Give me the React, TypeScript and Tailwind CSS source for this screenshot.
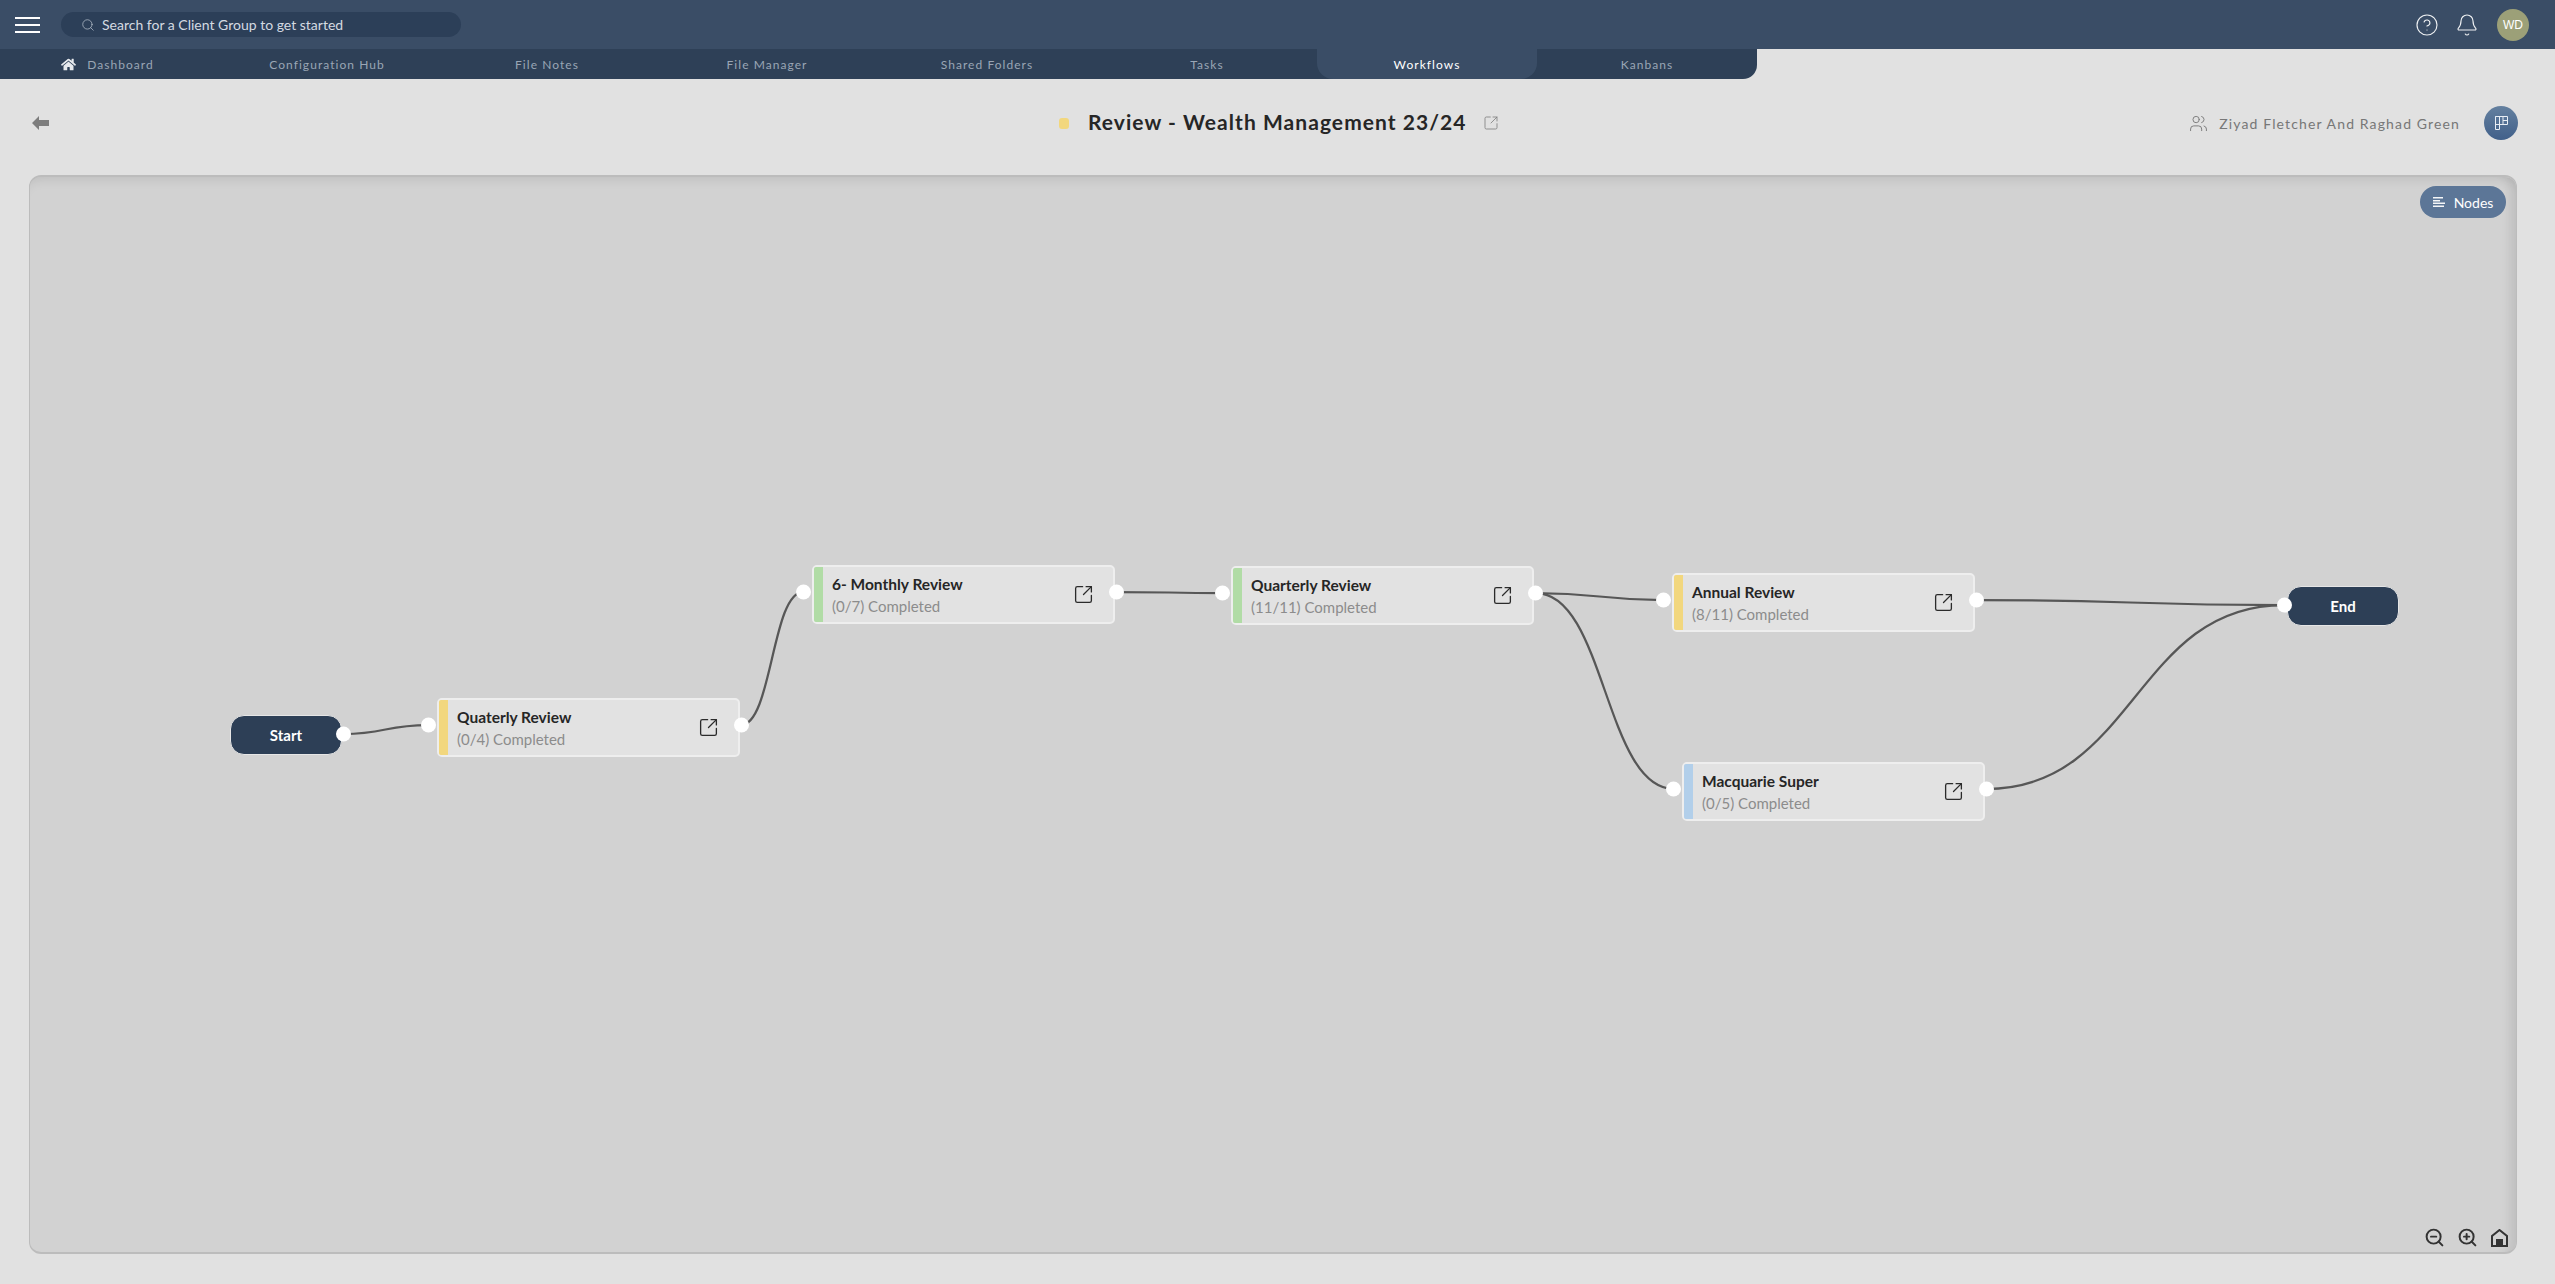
import { Bell, CircleHelp, Search, SquareArrowOutUpRight, Users, ZoomIn, ZoomOut } from "lucide-react"
import { FaHome } from "react-icons/fa"

const lato = "font-['Lato',sans-serif]"

const tabs = ["Configuration Hub", "File Notes", "File Manager", "Shared Folders", "Tasks"]

const edges = [
    [343, 734, 428, 725],
    [741, 725, 803, 592],
    [1115, 592, 1223, 593],
    [1536, 593, 1663, 600],
    [1536, 593, 1674, 789],
    [1976, 600, 2284, 605],
    [1986, 789, 2284, 605],
]

const nodes = [
    { left: 407, top: 521, title: "Quaterly Review", sub: "(0/4) Completed", bar: "bg-[#f2d77e]" },
    { left: 782, top: 388, title: "6- Monthly Review", sub: "(0/7) Completed", bar: "bg-[#b1dca6]" },
    { left: 1201, top: 389, title: "Quarterly Review", sub: "(11/11) Completed", bar: "bg-[#b1dca6]" },
    { left: 1642, top: 396, title: "Annual Review", sub: "(8/11) Completed", bar: "bg-[#f2d77e]" },
    { left: 1652, top: 585, title: "Macquarie Super", sub: "(0/5) Completed", bar: "bg-[#b2cfea]" },
]

const Handle = ({ className }: { className: string }) => (
    <span className={`absolute w-[15px] h-[15px] rounded-full bg-white -translate-y-1/2 ${className}`} />
)

const TaskNode = ({ left, top, title, sub, bar }: (typeof nodes)[number]) => (
    <div
        className="absolute w-[303px] h-[59px] flex bg-[#e2e2e2] border-2 border-[#eeeeee] rounded-[5px]"
        style={{ left, top }}
    >
        <div className={`w-[9px] shrink-0 rounded-l-[2px] ${bar}`} />
        <div className="flex-1 pl-[9px] pt-[6px]">
            <div className="text-[15.5px] leading-[22px] font-bold text-[#262626]">{title}</div>
            <div className="text-[15px] leading-[22px] text-[#8c8c8c]">{sub}</div>
        </div>
        <SquareArrowOutUpRight size={21} strokeWidth={1.5} className="mt-[17px] mr-[19px] text-[#2b2b2b]" />
        <Handle className="left-[-18px] top-[25px]" />
        <Handle className="right-[-11px] top-[25px]" />
    </div>
)

const Terminal = ({ label, left, top, handle }: { label: string; left: number; top: number; handle: string }) => (
    <div
        className="absolute w-[112px] h-[40px] flex items-center justify-center bg-[#2d3f56] border border-[#e6e6e6] rounded-[14px] text-[15px] font-bold text-white"
        style={{ left, top }}
    >
        {label}
        <Handle className={`top-[18px] ${handle}`} />
    </div>
)

const App = () => {
    return (
        <div className={`h-screen flex flex-col bg-[#e1e1e1] overflow-hidden ${lato}`}>
            <header className="h-[49px] shrink-0 flex items-center bg-[#3a4d66] pl-[15px] pr-[26px]">
                <div className="w-[25px] flex flex-col gap-[5px]">
                    <span className="h-[2px] bg-white" />
                    <span className="h-[2px] bg-white" />
                    <span className="h-[2px] bg-white" />
                </div>
                <div className="ml-[21px] w-[400px] h-[25px] flex items-center pl-[20px] rounded-full bg-[#2c3f58]">
                    <Search size={14} strokeWidth={1.25} className="text-[#b9c2cd]" />
                    <span className="ml-[7px] text-[14px] text-[#d4dae1]">Search for a Client Group to get started</span>
                </div>
                <div className="ml-auto flex items-center">
                    <CircleHelp size={24} strokeWidth={1.15} className="text-[#eef0f2]" />
                    <Bell size={24} strokeWidth={1.15} className="ml-[16px] text-[#eef0f2]" />
                    <div className="ml-[18px] w-[32px] h-[32px] rounded-full flex items-center justify-center bg-[#9ca078] text-[12px] text-white font-['Liberation_Sans',sans-serif]">
                        WD
                    </div>
                </div>
            </header>

            <nav className="h-[30px] shrink-0 w-[1757px] flex bg-[#2e4057] rounded-br-[14px] overflow-hidden text-[12px] tracking-[1.05px] text-[#9aa6b5]">
                <div className="w-[217px] pt-[2px] flex items-center justify-center">
                    <FaHome size={15} className="mr-[9px] -translate-x-[2px] -translate-y-[1px] text-[#e6e9ed]" />
                    Dashboard
                </div>
                {tabs.map((tab) => (
                    <div key={tab} className="w-[220px] pt-[2px] flex items-center justify-center">
                        {tab}
                    </div>
                ))}
                <div className="w-[220px] pt-[2px] flex items-center justify-center bg-[#3a4d66] rounded-b-[16px] text-white">
                    Workflows
                </div>
                <div className="w-[220px] pt-[2px] flex items-center justify-center">Kanbans</div>
            </nav>

            <div className="h-[96px] shrink-0 flex items-center pb-[8px] pl-[32px] pr-[37px]">
                <svg width="17" height="14" viewBox="0 0 17 14" fill="#7d7d7d">
                    <path d="M0 7 7 0v4h10v6H7v4z" />
                </svg>
                <div className="ml-[1010px] w-[10px] h-[11px] rounded-[3px] bg-[#f2d77e]" />
                <h1 className="ml-[19px] mb-[4px] text-[21px] leading-none font-bold tracking-[1.05px] text-[#262626]">
                    Review - Wealth Management 23/24
                </h1>
                <SquareArrowOutUpRight size={16} strokeWidth={1.25} className="ml-[16px] text-[#808080]" />
                <Users size={19} strokeWidth={1.25} className="ml-auto text-[#7d7d7d]" />
                <span className="ml-[11px] text-[14px] tracking-[1.13px] text-[#777777]">
                    Ziyad Fletcher And Raghad Green
                </span>
                <button className="ml-[24px] w-[34px] h-[34px] rounded-full flex items-center justify-center bg-gradient-to-b from-[#64809f] to-[#41608a]">
                    <svg width="13" height="14" viewBox="0 0 13 14" fill="none" stroke="#e8eef5" strokeWidth="1">
                        <path d="M.5.5h12v8h-12zM4.5.5v13H.5V.5M8 .5v8M8 4.5h4.5" />
                    </svg>
                </button>
            </div>

            <main className="relative ml-[29px] mr-[38px] h-[1079px] rounded-[12px] border-t-2 border-l border-b-2 border-r border-[#bcbcbc] bg-[#d2d2d2] shadow-[inset_-14px_0_10px_-8px_rgba(0,0,0,0.09),inset_0_12px_12px_-10px_rgba(0,0,0,0.1)] text-[#262626]">
                <button className="absolute right-[10px] top-[9px] w-[86px] h-[32px] flex items-center justify-center gap-[9px] rounded-full bg-[#5c7697] text-[14px] text-white">
                    <svg width="12" height="11" viewBox="0 0 12 11" fill="#f4f6f8">
                        <rect width="10" height="1.5" />
                        <rect y="3" width="7" height="1.5" />
                        <rect y="5.5" width="12" height="1.5" />
                        <rect y="8.5" width="11" height="1.5" />
                    </svg>
                    Nodes
                </button>

                <svg className="absolute left-[-30px] top-[-177px] w-[2555px] h-[1284px] pointer-events-none" fill="none">
                    {edges.map(([x1, y1, x2, y2]) => {
                        const mid = (x1 + x2) / 2
                        return (
                            <path
                                key={`${x1}-${x2}-${y2}`}
                                d={`M${x1} ${y1}C${mid} ${y1} ${mid} ${y2} ${x2} ${y2}`}
                                stroke="#575757"
                                strokeWidth="2.25"
                            />
                        )
                    })}
                </svg>

                <Terminal label="Start" left={200} top={538} handle="right-[-10px]" />
                <Terminal label="End" left={2257} top={409} handle="left-[-11px]" />
                {nodes.map((n) => (
                    <TaskNode key={n.title} {...n} />
                ))}

                <div className="absolute right-[8px] bottom-[4px] flex items-center text-[#333333]">
                    <ZoomOut size={21} strokeWidth={2.25} />
                    <ZoomIn size={21} strokeWidth={2.25} className="ml-[12px]" />
                    <svg className="ml-[13px]" width="17" height="18" viewBox="0 0 17 18" fill="none" stroke="#333333" strokeWidth="2">
                        <path d="M1 17V7l7.5-6L16 7v10z" />
                        <rect x="5" y="10" width="7" height="8" fill="#333333" stroke="none" />
                    </svg>
                </div>
            </main>
        </div>
    )
}

export default App
